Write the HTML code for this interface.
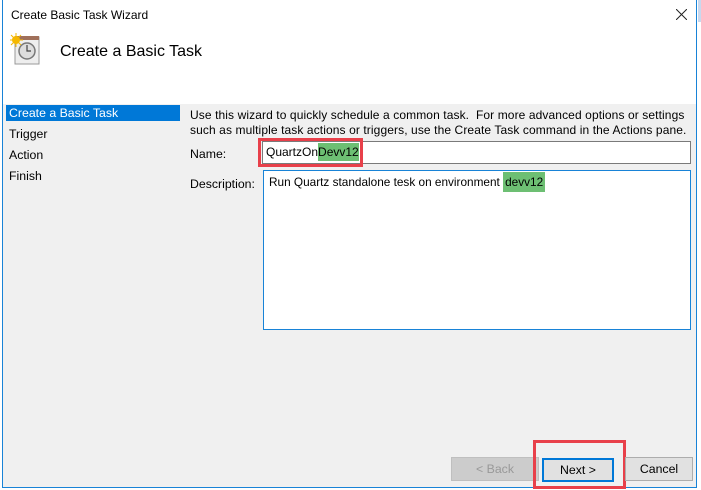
<!DOCTYPE html>
<html><head><meta charset="utf-8"><style>
body{margin:0;width:701px;height:490px;overflow:hidden;background:#fff;font-family:"Liberation Sans",sans-serif;font-size:12.3px;color:#000;position:relative}
.a{position:absolute;white-space:nowrap}
.g{background:#6dbf73;padding:2px 0}
</style></head><body>
<div class="a" style="left:698px;top:0;width:3px;height:22px;background:#c8d8ee"></div>
<div class="a" style="left:2px;top:0;width:1px;height:488px;background:#1883d7"></div>
<div class="a" style="left:696px;top:0;width:1px;height:488px;background:#1883d7"></div>
<div class="a" style="left:2px;top:487px;width:695px;height:1px;background:#1883d7"></div>
<div class="a" style="left:11px;top:8px;font-size:12px">Create Basic Task Wizard</div>
<svg class="a" style="left:676px;top:9px" width="11" height="11"><path d="M0 0L11 11M11 0L0 11" stroke="#222" stroke-width="1"/></svg>
<svg class="a" style="left:10px;top:33px" width="32" height="34" viewBox="0 0 32 34">
<rect x="5" y="4" width="24" height="27" fill="#eee" stroke="#999"/>
<rect x="5" y="3" width="24" height="4" fill="#a0705a"/>
<circle cx="17" cy="18" r="8" fill="#ddd" stroke="#777" stroke-width="1.5"/>
<path d="M17 12v6h4" stroke="#444" fill="none" stroke-width="1.2"/>
<circle cx="6" cy="7" r="4" fill="#f5b800"/>
<path d="M6 0v14M-1 7h14M1 2l10 10M11 2L1 12" stroke="#f5b800" stroke-width="1"/>
</svg>
<div class="a" style="left:60px;top:43px;font-size:16px">Create a Basic Task</div>
<div class="a" style="left:3px;top:104px;width:693px;height:383px;background:#f0f0f0"></div>
<div class="a" style="left:6px;top:105px;width:174px;height:16px;background:#0078d7"></div>
<div class="a" style="left:9px;top:106px;color:#fff">Create a Basic Task</div>
<div class="a" style="left:9px;top:127px">Trigger</div>
<div class="a" style="left:9px;top:148px">Action</div>
<div class="a" style="left:9px;top:169px">Finish</div>
<div class="a" style="left:190px;top:108px;line-height:15px;font-size:12px;letter-spacing:0.1px">Use this wizard to quickly schedule a common task.&nbsp; For more advanced options or settings<br>such as multiple task actions or triggers, use the Create Task command in the Actions pane.</div>
<div class="a" style="left:190px;top:147px">Name:</div>
<div class="a" style="left:262px;top:141px;width:427px;height:21px;background:#fff;border:1px solid #7a7a7a"></div>
<div class="a" style="left:266px;top:145px;font-size:12px">QuartzOn<span class="g">Devv12</span></div>
<div class="a" style="left:258px;top:138px;width:99px;height:23px;border:3px solid #e8404a"></div>
<div class="a" style="left:190px;top:177px">Description:</div>
<div class="a" style="left:263px;top:170px;width:426px;height:158px;background:#fff;border:1px solid #1883d7"></div>
<div class="a" style="left:269px;top:175px;font-size:11.8px">Run Quartz standalone tesk on environment <span class="g" style="padding:3px 2px">devv12</span></div>
<div class="a" style="left:451px;top:457px;width:86px;height:22px;background:#ccc;border:1px solid #bfbfbf;color:#999;text-align:center;line-height:22px">&lt; Back</div>
<div class="a" style="left:542px;top:458px;width:68px;height:20px;background:#e1e1e1;border:2px solid #0078d7;text-align:center;line-height:20px">Next &gt;</div>
<div class="a" style="left:533px;top:440px;width:87px;height:43px;border:3px solid #e8404a"></div>
<div class="a" style="left:625px;top:457px;width:66px;height:22px;background:#e1e1e1;border:1px solid #adadad;text-align:center;line-height:22px">Cancel</div>
</body></html>
